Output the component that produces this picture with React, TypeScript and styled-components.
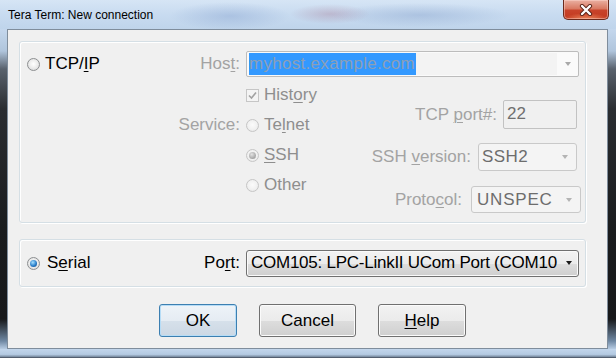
import React from "react";
import styled, { createGlobalStyle, css } from "styled-components";

const GlobalStyle = createGlobalStyle`
  html, body {
    margin: 0;
    padding: 0;
    background: #1b1d1f;
  }
  body {
    font-family: "Liberation Sans", Arial, sans-serif;
  }
  * {
    box-sizing: border-box;
  }
`;

const Window = styled.div`
  width: 616px;
  height: 358px;
  display: flex;
  flex-direction: column;
  overflow: hidden;
`;

const TitleBar = styled.div`
  height: 29px;
  display: flex;
  align-items: flex-start;
  padding-left: 8px;
  padding-right: 7px;
  background:
    radial-gradient(ellipse 60px 14px at 230px 16px, rgba(120, 150, 200, 0.35), transparent),
    radial-gradient(ellipse 40px 10px at 330px 14px, rgba(150, 80, 110, 0.25), transparent),
    radial-gradient(ellipse 90px 12px at 420px 15px, rgba(110, 140, 190, 0.3), transparent),
    linear-gradient(180deg, #d6e5f5 0%, #c8dbf0 50%, #bfd4eb 100%);
`;

const Title = styled.div`
  flex: 1;
  font-size: 12px;
  line-height: 30px;
  color: #000;
`;

const CloseButton = styled.div`
  width: 46px;
  height: 20px;
  display: flex;
  align-items: center;
  justify-content: center;
  border: 1px solid #6b2a1c;
  border-top: none;
  border-radius: 0 0 5px 5px;
  background:
    radial-gradient(ellipse 22px 6px at 50% 100%, rgba(255, 170, 120, 0.7), transparent),
    linear-gradient(180deg, #eab0a2 0%, #d97a63 45%, #c8432a 55%, #c2391f 100%);
  box-shadow: inset 0 0 0 1px rgba(255, 220, 210, 0.45);
`;

const Middle = styled.div`
  height: 320px;
  display: flex;
`;

const SideFrame = styled.div<{ $w: number }>`
  width: ${(p) => p.$w}px;
  background: linear-gradient(
    180deg,
    #c4d7ed 0px,
    #b0c5dc 22px,
    #59626d 40px,
    #2a2d31 80px,
    #1a1c1e 200px,
    #17181a 290px,
    #6f88a3 312px,
    #b7cce3 320px
  );
`;

const BottomFrame = styled.div`
  height: 9px;
  background: linear-gradient(180deg, #c2d6ec 0%, #b4cae2 60%, #7c8fa4 85%, #3a4250 100%);
`;

const Client = styled.div`
  flex: 1;
  background: #f0f0f0;
  border: 1px solid #7f8d9c;
  padding: 11px 0 0 11px;
  display: flex;
  flex-direction: column;
`;

const Group = styled.div<{ $h: number; $top?: number }>`
  width: 567px;
  height: ${(p) => p.$h}px;
  margin-top: ${(p) => p.$top ?? 0}px;
  border: 1px solid #d5dfe5;
  border-radius: 3px;
  box-shadow: inset 1px 1px 0 #fff, 1px 1px 0 #fff;
  display: flex;
`;

const TcpGroup = styled(Group)`
  padding-top: 9px;
  align-items: flex-start;
`;

const SerialGroup = styled(Group)`
  align-items: center;
`;

const RadioCell = styled.label<{ $gap: number }>`
  width: 157px;
  height: 26px;
  padding-left: 7px;
  display: flex;
  align-items: center;
  gap: ${(p) => p.$gap}px;
  font-size: 17px;
  color: #000;
`;

const Main = styled.div`
  width: 402px;
  display: flex;
  flex-direction: column;
`;

const FieldRow = styled.div`
  display: grid;
  grid-template-columns: 63px 333px;
  column-gap: 6px;
  align-items: center;
`;

const Label = styled.span<{ $disabled?: boolean }>`
  font-size: 17px;
  white-space: nowrap;
  text-align: right;
  color: ${(p) => (p.$disabled ? "#a3a3a3" : "#000")};
`;

const Key = styled.u`
  text-decoration-thickness: 1px;
  text-underline-offset: 2px;
`;

const Lower = styled.div`
  margin-top: 3px;
  display: flex;
  justify-content: space-between;
`;

const Options = styled.div`
  display: grid;
  grid-template-columns: 63px auto;
  grid-auto-rows: 30px;
  column-gap: 6px;
  align-items: center;
`;

const Option = styled.label`
  display: flex;
  align-items: center;
  gap: 5px;
  font-size: 17px;
  color: #8e8e8e;
  white-space: nowrap;
`;

const Settings = styled.div`
  padding-top: 20px;
  display: flex;
  flex-direction: column;
  align-items: flex-end;
`;

const SettingRow = styled.div<{ $top?: number; $gap: number; $right: number }>`
  display: flex;
  align-items: center;
  gap: ${(p) => p.$gap}px;
  margin-top: ${(p) => p.$top ?? 0}px;
  margin-right: ${(p) => p.$right}px;
`;

const Radio = styled.span<{ $checked?: boolean; $disabled?: boolean }>`
  position: relative;
  flex: none;
  width: 13px;
  height: 13px;
  border-radius: 50%;
  border: 1px solid ${(p) => (p.$disabled ? "#c6c6c6" : "#8d8f91")};
  background: ${(p) =>
    p.$disabled
      ? "radial-gradient(circle at 50% 45%, #fbfbfb 0%, #f1f1f1 55%, #e2e2e2 100%)"
      : "radial-gradient(circle at 50% 45%, #ffffff 0%, #ececec 50%, #cfd0d1 100%)"};
  ${(p) =>
    p.$checked &&
    css`
      &::after {
        content: "";
        position: absolute;
        left: 2px;
        top: 2px;
        width: 7px;
        height: 7px;
        border-radius: 50%;
        background: ${p.$disabled
          ? "radial-gradient(circle at 40% 35%, #e4e4e4 0%, #acacac 60%, #8f8f8f 100%)"
          : "radial-gradient(circle at 40% 35%, #a6e0ff 0%, #2a7fcb 55%, #0f3f78 100%)"};
      }
    `}
`;

const CheckBox = styled.span`
  flex: none;
  width: 13px;
  height: 13px;
  border: 1px solid #c6c6c6;
  background: #f4f4f4;
  display: flex;
  align-items: center;
  justify-content: center;
`;

const Arrow = styled.span<{ $color: string }>`
  flex: none;
  width: 0;
  height: 0;
  border-left: 3.5px solid transparent;
  border-right: 3.5px solid transparent;
  border-top: 4px solid ${(p) => p.$color};
`;

const HostCombo = styled.div`
  width: 333px;
  height: 26px;
  border: 1px solid #bcbcbc;
  border-radius: 2px;
  background: #fafafa;
  padding: 1px 0 1px 2px;
  display: flex;
`;

const HostEdit = styled.div`
  flex: 1;
  background: #f3f3f3;
  display: flex;
  overflow: hidden;
`;

const Selection = styled.span`
  background: #3399ff;
  color: #8c9fb6;
  font-size: 17px;
  line-height: 22px;
  padding-right: 1px;
  letter-spacing: 0.3px;
  white-space: nowrap;
`;

const ArrowZone = styled.div`
  width: 21px;
  display: flex;
  align-items: center;
  justify-content: center;
`;

const PortInput = styled.div`
  width: 74px;
  height: 29px;
  border: 1px solid #c2c2c2;
  border-radius: 2px;
  background: #f0f0f0;
  padding: 3px 0 0 3px;
  font-size: 17px;
  line-height: 19px;
  color: #6f6f6f;
`;

const Combo = styled.div<{ $w: number; $h: number; $pad: number; $enabled?: boolean }>`
  width: ${(p) => p.$w}px;
  height: ${(p) => p.$h}px;
  padding: 0 ${(p) => (p.$enabled ? 6 : 8)}px 0 ${(p) => p.$pad}px;
  border-radius: 3px;
  display: flex;
  align-items: center;
  gap: 3px;
  font-size: 17px;
  ${(p) =>
    p.$enabled
      ? css`
          border: 1px solid #707070;
          color: #000;
          background: linear-gradient(180deg, #f3f3f3 0%, #ebebeb 50%, #dddddd 51%, #cfcfcf 100%);
          box-shadow: inset 0 0 0 1px #fafafa;
        `
      : css`
          border: 1px solid #c9c9c9;
          color: #6d6d6d;
          background: #f4f4f4;
        `}
`;

const ComboText = styled.span<{ $spacing?: number }>`
  flex: 1;
  white-space: nowrap;
  letter-spacing: ${(p) => p.$spacing ?? 0.4}px;
`;

const ButtonRow = styled.div`
  margin-top: 17px;
  padding-left: 140px;
  display: flex;
  gap: 22px;
`;

const Button = styled.button<{ $w: number; $default?: boolean }>`
  width: ${(p) => p.$w}px;
  height: 33px;
  padding: 0;
  border-radius: 3px;
  font-family: "Liberation Sans", Arial, sans-serif;
  font-size: 17px;
  color: #000;
  ${(p) =>
    p.$default
      ? css`
          border: 1px solid #3c7fb1;
          background: linear-gradient(180deg, #eef3f8 0%, #e5ecf3 50%, #d6e0ea 51%, #ccd8e4 100%);
          box-shadow: inset 0 0 0 1px #b6dcf6;
        `
      : css`
          border: 1px solid #707070;
          background: linear-gradient(180deg, #f2f2f2 0%, #ebebeb 50%, #dddddd 51%, #cfcfcf 100%);
          box-shadow: inset 0 0 0 1px #fbfbfb;
        `}
`;

export default function App() {
  return (
    <>
      <GlobalStyle />
      <Window>
        <TitleBar>
          <Title>Tera Term: New connection</Title>
          <CloseButton>
            <svg width="14" height="12" viewBox="0 0 14 12">
              <path d="M3 2 L11 10 M11 2 L3 10" stroke="#5a2418" strokeWidth="4.2" strokeLinecap="round" />
              <path d="M3 2 L11 10 M11 2 L3 10" stroke="#ffffff" strokeWidth="2.4" strokeLinecap="round" />
            </svg>
          </CloseButton>
        </TitleBar>
        <Middle>
          <SideFrame $w={7} />
          <Client>
            <TcpGroup $h={182}>
              <RadioCell $gap={5}>
                <Radio />
                <span>
                  TCP/<Key>I</Key>P
                </span>
              </RadioCell>
              <Main>
                <FieldRow>
                  <Label $disabled>
                    Hos<Key>t</Key>:
                  </Label>
                  <HostCombo>
                    <HostEdit>
                      <Selection>myhost.example.com</Selection>
                    </HostEdit>
                    <ArrowZone>
                      <Arrow $color="#a9a9a9" />
                    </ArrowZone>
                  </HostCombo>
                </FieldRow>
                <Lower>
                  <Options>
                    <span />
                    <Option>
                      <CheckBox>
                        <svg width="9" height="9" viewBox="0 0 9 9">
                          <path d="M1 4.5 L3.5 7 L8 1.5" fill="none" stroke="#a2a2a2" strokeWidth="1.6" />
                        </svg>
                      </CheckBox>
                      <span>
                        Hist<Key>o</Key>ry
                      </span>
                    </Option>
                    <Label $disabled>Service:</Label>
                    <Option>
                      <Radio $disabled />
                      <span>
                        Te<Key>l</Key>net
                      </span>
                    </Option>
                    <span />
                    <Option>
                      <Radio $disabled $checked />
                      <span>
                        <Key>S</Key>SH
                      </span>
                    </Option>
                    <span />
                    <Option>
                      <Radio $disabled />
                      <span>Other</span>
                    </Option>
                  </Options>
                  <Settings>
                    <SettingRow $gap={6} $right={2}>
                      <Label $disabled>
                        TCP <Key>p</Key>ort#:
                      </Label>
                      <PortInput>22</PortInput>
                    </SettingRow>
                    <SettingRow $top={14} $gap={7} $right={2}>
                      <Label $disabled>
                        SSH <Key>v</Key>ersion:
                      </Label>
                      <Combo $w={99} $h={28} $pad={3}>
                        <ComboText>SSH2</ComboText>
                        <Arrow $color="#b4b4b4" />
                      </Combo>
                    </SettingRow>
                    <SettingRow $top={15} $gap={9} $right={-2}>
                      <Label $disabled>
                        Proto<Key>c</Key>ol:
                      </Label>
                      <Combo $w={110} $h={27} $pad={5}>
                        <ComboText $spacing={0.8}>UNSPEC</ComboText>
                        <Arrow $color="#b4b4b4" />
                      </Combo>
                    </SettingRow>
                  </Settings>
                </Lower>
              </Main>
            </TcpGroup>
            <SerialGroup $h={48} $top={16}>
              <RadioCell $gap={7}>
                <Radio $checked />
                <span>
                  S<Key>e</Key>rial
                </span>
              </RadioCell>
              <Main>
                <FieldRow>
                  <Label>
                    Po<Key>r</Key>t:
                  </Label>
                  <Combo $w={333} $h={27} $pad={4} $enabled>
                    <ComboText $spacing={-0.25}>COM105: LPC-LinkII UCom Port (COM10</ComboText>
                    <Arrow $color="#1a1a1a" />
                  </Combo>
                </FieldRow>
              </Main>
            </SerialGroup>
            <ButtonRow>
              <Button $w={78} $default>
                OK
              </Button>
              <Button $w={97}>Cancel</Button>
              <Button $w={88}>
                <Key>H</Key>elp
              </Button>
            </ButtonRow>
          </Client>
          <SideFrame $w={8} />
        </Middle>
        <BottomFrame />
      </Window>
    </>
  );
}
